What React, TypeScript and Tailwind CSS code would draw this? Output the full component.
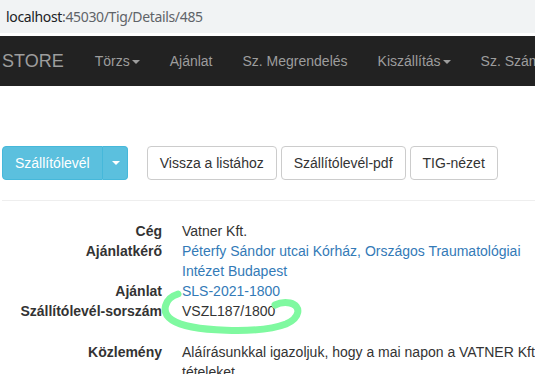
import React from 'react';

const navItems = [
  { label: 'Törzs', caret: true },
  { label: 'Ajánlat', caret: false },
  { label: 'Sz. Megrendelés', caret: false },
  { label: 'Kiszállítás', caret: true },
  { label: 'Sz. Számla', caret: false },
];

const Caret: React.FC<{ color: string }> = ({ color }) => (
  <span
    className="inline-block ml-[2px] align-middle w-0 h-0 border-t-[4px] border-x-[4px] border-x-transparent"
    style={{ borderTopColor: color }}
  />
);

const App: React.FC = () => {
  return (
    <div className="relative w-[535px] h-[374px] overflow-hidden bg-white font-['Liberation_Sans',Arial,sans-serif] text-[14px] leading-[20px] text-[#333]">
      <div className="w-[700px]">
        {/* address bar */}
        <div className="h-[33px] bg-[#f1f3f4] flex items-center pl-[6px] font-['Noto_Sans',sans-serif] text-[14px] tracking-[-0.35px]">
          <span className="text-[#202124]">localhost</span>
          <span className="text-[#5f6368]">:45030/Tig/Details/485</span>
        </div>
        <div className="h-[3px] bg-white" />

        {/* navbar */}
        <div className="h-[50px] bg-[#222] flex items-center text-[#9d9d9d]">
          <span className="pl-[2px] pr-[16px] text-[18px]">STORE</span>
          {navItems.map((item) => (
            <span key={item.label} className="px-[15px] whitespace-nowrap">
              {item.label}
              {item.caret && <Caret color="#9d9d9d" />}
            </span>
          ))}
        </div>

        <div className="pl-[2px]">
          {/* buttons */}
          <div className="mt-[60px] flex items-center">
            <div className="flex">
              <span className="h-[34px] px-[12px] flex items-center bg-[#5bc0de] border border-[#46b8da] text-white rounded-l-[4px]">
                Szállítólevél
              </span>
              <span className="h-[34px] w-[25px] flex items-center justify-center bg-[#5bc0de] border border-l-0 border-[#46b8da] rounded-r-[4px]">
                <Caret color="#ffffff" />
              </span>
            </div>
            <span className="ml-[19px] h-[34px] px-[12px] flex items-center border border-[#ccc] rounded-[4px]">
              Vissza a listához
            </span>
            <span className="ml-[4px] h-[34px] px-[12px] flex items-center border border-[#ccc] rounded-[4px]">
              Szállítólevél-pdf
            </span>
            <span className="ml-[4px] h-[34px] px-[12px] flex items-center border border-[#ccc] rounded-[4px]">
              TIG-nézet
            </span>
          </div>

          <div className="mt-[20px] border-t border-[#eee]" />

          {/* details */}
          <dl className="mt-[20px] w-[560px]">
            <div className="flex">
              <dt className="w-[160px] shrink-0 text-right font-bold">Cég</dt>
              <dd className="ml-[20px]">Vatner Kft.</dd>
            </div>
            <div className="flex">
              <dt className="w-[160px] shrink-0 text-right font-bold">Ajánlatkérő</dt>
              <dd className="ml-[20px] text-[#337ab7]">
                Péterfy Sándor utcai Kórház, Országos Traumatológiai Intézet Budapest
              </dd>
            </div>
            <div className="flex">
              <dt className="w-[160px] shrink-0 text-right font-bold">Ajánlat</dt>
              <dd className="ml-[20px] text-[#337ab7]">SLS-2021-1800</dd>
            </div>
            <div className="flex">
              <dt className="w-[160px] shrink-0 text-right font-bold">Szállítólevél-sorszám</dt>
              <dd className="ml-[20px]">VSZL187/1800</dd>
            </div>
          </dl>

          <dl className="mt-[21px]">
            <div className="flex">
              <dt className="w-[160px] shrink-0 text-right font-bold">Közlemény</dt>
              <dd className="ml-[20px] w-[470px] shrink-0">
                Aláírásunkkal igazoljuk, hogy a mai napon a VATNER Kft. által szállított tételeket
              </dd>
            </div>
          </dl>
        </div>
      </div>

      {/* hand-drawn highlight */}
      <svg className="absolute left-0 top-0 pointer-events-none" width="535" height="374">
        <path
          d="M178 294 C 165 298, 160 312, 172 320 C 190 332, 260 334, 286 324 C 300 318, 302 306, 290 303 C 284 302, 279 303, 275 305"
          fill="none"
          stroke="#7ff9a0"
          strokeWidth="7"
          strokeLinecap="round"
        />
      </svg>
    </div>
  );
};

export default App;
